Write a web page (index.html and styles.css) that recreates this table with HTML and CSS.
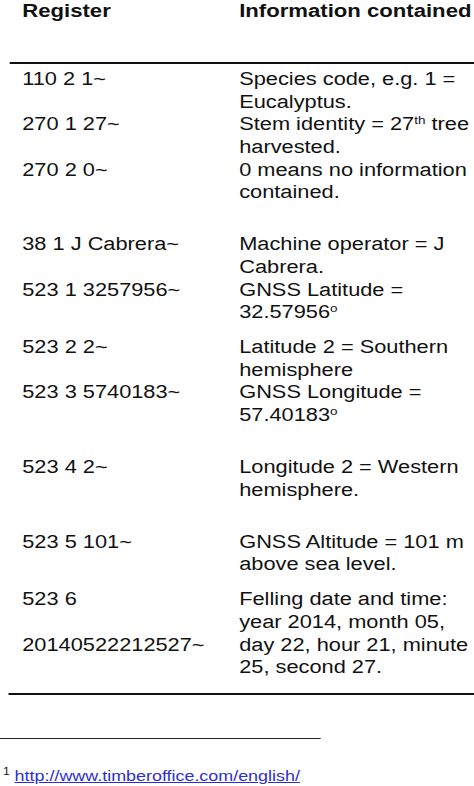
FILE: index.html
```html
<!DOCTYPE html>
<html lang="en">
<head>
<meta charset="utf-8">
<title>Register table</title>
<link rel="stylesheet" href="styles.css">
</head>
<body>
<div class="page">
  <div class="tbl">
    <div class="head">
      <div class="c1">Register</div>
      <div class="c2">Information contained</div>
    </div>
    <div class="tbody">
      <div class="row"><div class="c1">110 2 1~</div><div class="c2">Species code, e.g. 1 =<br>Eucalyptus.</div></div>
      <div class="row"><div class="c1">270 1 27~</div><div class="c2">Stem identity = 27<sup>th</sup> tree<br>harvested.</div></div>
      <div class="row"><div class="c1">270 2 0~</div><div class="c2">0 means no information<br>contained.</div></div>
      <div class="row gap-l"><div class="c1">38 1 J Cabrera~</div><div class="c2">Machine operator = J<br>Cabrera.</div></div>
      <div class="row"><div class="c1">523 1 3257956~</div><div class="c2">GNSS Latitude =<br>32.57956<sup>o</sup></div></div>
      <div class="row gap-s"><div class="c1">523 2 2~</div><div class="c2">Latitude 2 = Southern<br>hemisphere</div></div>
      <div class="row"><div class="c1">523 3 5740183~</div><div class="c2">GNSS Longitude =<br>57.40183<sup>o</sup></div></div>
      <div class="row gap-l"><div class="c1">523 4 2~</div><div class="c2">Longitude 2 = Western<br>hemisphere.</div></div>
      <div class="row gap-l"><div class="c1">523 5 101~</div><div class="c2">GNSS Altitude = 101 m<br>above sea level.</div></div>
      <div class="row gap-s"><div class="c1">523 6<br><br>20140522212527~</div><div class="c2">Felling date and time:<br>year 2014, month 05,<br>day 22, hour 21, minute<br>25, second 27.</div></div>
    </div>
  </div>
  <div class="notes">
    <div class="rule"></div>
    <p class="fn"><sup class="mark">1</sup> <a class="link" href="#">http://www.timberoffice.com/english/</a></p>
  </div>
</div>
</body>
</html>
```

FILE: styles.css
```css
html, body {
  margin: 0;
  padding: 0;
  background: #ffffff;
  overflow: hidden;
}

body {
  width: 474px;
  height: 786px;
  font-family: "Liberation Sans", Arial, sans-serif;
  color: #111111;
}

/* source image is horizontally stretched relative to the glyph height */
.page {
  width: 392px;
  transform: scaleX(1.21);
  transform-origin: 0 0;
}

.tbl {
  margin-left: 6.6px;
}

.head {
  display: grid;
  grid-template-columns: 189.4px 1fr;
  margin-left: 1.7px;
  height: 62px;
  border-bottom: 2px solid #111111;
  font-weight: bold;
  font-size: 18.3px;
  line-height: 21px;
  white-space: nowrap;
}

.head .c1 {
  padding-left: 10.1px;
}

.tbody {
  padding-top: 4.3px;
  padding-bottom: 14.5px;
  border-bottom: 2px solid #111111;
  font-size: 18px;
  line-height: 22.6px;
}

.row {
  display: grid;
  grid-template-columns: 191.1px 1fr;
}

.row.gap-l {
  padding-top: 29.5px;
}

.row.gap-s {
  padding-top: 12.5px;
}

.c1 {
  padding-left: 11.8px;
  white-space: nowrap;
}

.c2 {
  white-space: nowrap;
}

sup {
  font-size: 0.62em;
  line-height: 0;
  vertical-align: 0.5em;
}

.notes {
  margin-top: 43px;
}

.rule {
  width: 265px;
  height: 0;
  border-top: 1.5px solid #222222;
}

.fn {
  margin: 28px 0 0 2.4px;
  font-size: 14.8px;
  line-height: 18px;
  white-space: nowrap;
}

.fn .mark {
  font-size: 10px;
  vertical-align: 0.6em;
}

.link {
  color: #2d2dd8;
  text-decoration: underline;
  text-underline-offset: 1px;
}
```
